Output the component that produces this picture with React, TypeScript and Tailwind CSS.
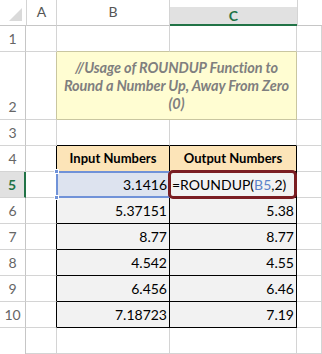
import React from 'react';

// 列宽：行号 / A / B / C / D
const W = { h: 'w-[26px]', a: 'w-[31px]', b: 'w-[113px]', c: 'w-[127px]', d: 'flex-1' };

const font = "font-['Lato','Liberation_Sans',sans-serif]";

const rows: { n: number; input: string; output: string }[] = [
  { n: 6, input: '5.37151', output: '5.38' },
  { n: 7, input: '8.77', output: '8.77' },
  { n: 8, input: '4.542', output: '4.55' },
  { n: 9, input: '6.456', output: '6.46' },
  { n: 10, input: '7.18723', output: '7.19' },
];

function RowHead({ n, active = false }: { n: number; active?: boolean }) {
  return (
    <div
      className={`${W.h} shrink-0 flex items-end justify-center pb-[2px] text-[14px] border-b border-[#d4d4d4] ${
        active
          ? 'bg-[#e1e1e1] border-r-2 border-r-[#217346] font-bold text-[#217346]'
          : 'border-r border-r-[#c6c6c6] text-[#666]'
      }`}
    >
      {n}
    </div>
  );
}

function Blank({ w, r = 'border-r-[#d4d4d4]', b = 'border-b-[#d4d4d4]' }: { w: string; r?: string; b?: string }) {
  return <div className={`${w} shrink-0 border-r border-b ${r} ${b}`} />;
}

export default function App() {
  return (
    <div className={`w-[322px] h-[354px] bg-white overflow-hidden ${font} text-black`}>
      {/* 列标题 */}
      <div className="flex h-[26px]">
        <div className={`${W.h} shrink-0 relative border-b border-[#c6c6c6]`}>
          <div className="absolute right-[4px] bottom-[4px] w-0 h-0 border-l-[13px] border-l-transparent border-b-[13px] border-b-[#dadada]" />
        </div>
        <div className={`${W.a} shrink-0 flex items-end justify-center pb-[3px] text-[14px] text-[#555] border-l border-r border-b border-[#d4d4d4] border-b-[#c6c6c6]`}>A</div>
        <div className={`${W.b} shrink-0 flex items-end justify-center pb-[3px] text-[14px] text-[#555] border-r border-b border-[#d4d4d4] border-b-[#c6c6c6]`}>B</div>
        <div className={`${W.c} shrink-0 flex flex-col justify-end`}>
          <div className="h-[19px] bg-[#e1e1e1] border-b-2 border-[#217346] flex items-center justify-center text-[14px] font-bold text-[#217346]">C</div>
        </div>
        <div className={`${W.d} border-l border-b border-[#d4d4d4] border-b-[#c6c6c6]`} />
      </div>

      {/* 1 */}
      <div className="flex h-[26px]">
        <RowHead n={1} />
        <Blank w={W.a} />
        <Blank w={W.b} b="border-b-[#c9c6a0]" />
        <Blank w={W.c} b="border-b-[#c9c6a0]" />
        <Blank w={W.d} />
      </div>

      {/* 2 标题 */}
      <div className="flex h-[68px]">
        <RowHead n={2} />
        <Blank w={W.a} r="border-r-[#c9c6a0]" />
        <div className="w-[240px] shrink-0 bg-[#fffdd2] border-r border-b border-[#c9c6a0] flex items-center justify-center text-center text-[14.5px] leading-[18px] font-bold italic text-[#7f7f7f] tracking-[-0.1px]">
          <span>
            //Usage of ROUNDUP Function to
            <br />
            Round a Number Up, Away From Zero
            <br />
            (0)
          </span>
        </div>
        <Blank w={W.d} />
      </div>

      {/* 3 */}
      <div className="flex h-[26px]">
        <RowHead n={3} />
        <Blank w={W.a} />
        <Blank w={W.b} b="border-b-black" />
        <Blank w={W.c} b="border-b-black" />
        <Blank w={W.d} />
      </div>

      {/* 4 表头 */}
      <div className="flex h-[26px]">
        <RowHead n={4} />
        <Blank w={W.a} r="border-r-black" />
        <div className={`${W.b} shrink-0 bg-[#fce4b8] border-r border-b border-black flex items-center justify-center text-[13px] font-bold`}>Input Numbers</div>
        <div className={`${W.c} shrink-0 bg-[#fce4b8] border-r border-b border-black flex items-center justify-center text-[13px] font-bold`}>Output Numbers</div>
        <Blank w={W.d} />
      </div>

      {/* 5 选中行 */}
      <div className="flex h-[26px]">
        <RowHead n={5} active />
        <Blank w={W.a} r="border-r-black" />
        <div className={`${W.b} shrink-0 relative bg-[#dde3ef] border-r border-b border-black flex items-end justify-end pb-[2px] pr-[2px] text-[14px]`}>
          3.1416
          <div className="absolute -left-px -top-px -right-px -bottom-px border-2 border-[#7092d8]" />
          <div className="absolute -left-[3px] -top-[3px] w-[5px] h-[5px] bg-[#7092d8] border border-white" />
          <div className="absolute -left-[3px] -bottom-[3px] w-[5px] h-[5px] bg-[#7092d8] border border-white" />
        </div>
        <div className={`${W.c} shrink-0 relative bg-[#f2f2f2] border-r border-b border-black flex items-end pb-[2px] pl-[2px] text-[14px]`}>
          =ROUNDUP(<span className="text-[#5b83c9]">B5</span>,2)
          <div className="absolute -left-[2px] -top-[2px] -right-[1px] -bottom-[2px] border-[3px] border-[#7a1d22] rounded-[5px]" />
        </div>
        <Blank w={W.d} />
      </div>

      {/* 6-10 数据 */}
      {rows.map((r) => (
        <div key={r.n} className="flex h-[26px]">
          <RowHead n={r.n} />
          <Blank w={W.a} r="border-r-black" />
          <div className={`${W.b} shrink-0 bg-[#f2f2f2] border-r border-b border-black flex items-end justify-end pb-[2px] pr-[2px] text-[14px]`}>{r.input}</div>
          <div className={`${W.c} shrink-0 bg-[#f2f2f2] border-r border-b border-black flex items-end justify-end pb-[2px] pr-[2px] text-[14px]`}>{r.output}</div>
          <Blank w={W.d} />
        </div>
      ))}

      {/* 11 */}
      <div className="flex h-[26px]">
        <div className={`${W.h} shrink-0 border-r border-[#c6c6c6]`} />
        <Blank w={W.a} />
        <Blank w={W.b} />
        <Blank w={W.c} />
        <Blank w={W.d} />
      </div>
    </div>
  );
}
